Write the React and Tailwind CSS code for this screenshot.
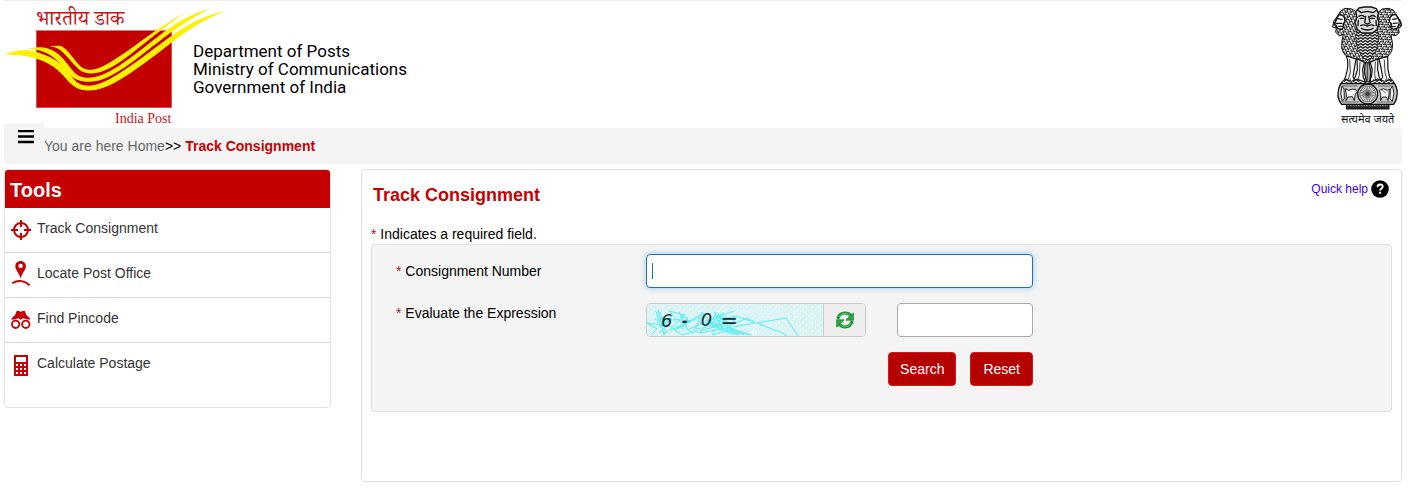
import React from "react";

const sans = "font-['Liberation_Sans',Arial,sans-serif]";

function IndiaPostLogo() {
  return (
    <svg viewBox="12 3 567 369" className="block h-[123px] w-[189px] shrink-0 overflow-visible" role="img" aria-label="India Post">
      <rect x="109" y="92" width="406" height="231" fill="#c20000" stroke="#d44" strokeWidth="1.5" />
      <g fill="#fff000">
        <path d="M147 138L182 137C205 147 225 185 243 200C260 213 282 211 302 202C370 172 465 83 558 37C470 92 375 190 308 214C280 224 255 222 238 209C215 190 195 158 176 147C168 142 158 140 147 138Z" />
        <path d="M84 147C105 141 125 140 142 145C180 155 200 192 222 216C237 232 258 236 282 232C342 220 420 150 480 105C530 66 580 38 630 27C570 55 525 88 480 122C420 167 350 230 290 243C255 250 225 242 207 222C185 195 162 166 130 155C115 150 100 147 84 147Z" />
        <path d="M13 163C40 153 65 148 84 151C132 158 175 180 202 212C217 232 227 250 252 256C282 261 312 248 350 225C400 195 450 155 500 118C550 80 610 46 676 33C610 60 560 92 512 130C452 177 402 215 352 244C312 267 282 274 255 271C225 267 210 250 193 230C165 197 130 181 100 173C70 166 40 165 13 163Z" />
      </g>
      <text x="108" y="76" fontSize="61" fill="#c4161c" fontFamily="'Noto Serif Devanagari','Noto Sans',serif">भारतीय डाक</text>
      <text x="345" y="369" fontSize="42" fill="#c4161c" fontFamily="'Liberation Serif',serif">India Post</text>
    </svg>
  );
}

function Emblem() {
  return (
    <svg viewBox="33 12 213 360" className="block h-[120px] w-[71px] shrink-0" role="img" aria-label="सत्यमेव जयते">
      <defs>
        <pattern id="maneLeft" width="13" height="9" patternUnits="userSpaceOnUse" patternTransform="rotate(32)">
          <rect width="13" height="9" fill="#fff" />
          <path d="M0 2Q4 8 8 3T13 2M6 5V9" fill="none" stroke="#111" strokeWidth="3.6" />
        </pattern>
        <pattern id="maneRight" width="13" height="9" patternUnits="userSpaceOnUse" patternTransform="rotate(-32)">
          <rect width="13" height="9" fill="#fff" />
          <path d="M0 2Q4 8 8 3T13 2M6 5V9" fill="none" stroke="#111" strokeWidth="3.6" />
        </pattern>
        <pattern id="maneFront" x="136" width="14" height="9" patternUnits="userSpaceOnUse">
          <rect width="14" height="9" fill="#fff" />
          <path d="M0 1L7 7L14 1" fill="none" stroke="#111" strokeWidth="3.8" />
        </pattern>
      </defs>
      <g stroke="#111" strokeWidth="3" strokeLinejoin="round">
        <path fill="url(#maneLeft)" d="M109 33L96 24L75 22L62 30L54 43L41 61L38 78L49 82L47 94L58 104L70 101L66 118L65 142L72 158L84 169L112 174L142 187V95L126 95L113 84Z" />
        <path fill="url(#maneRight)" d="M174 34L187 24L205 22L220 27L230 44L242 60L245 75L235 84L238 94L228 104L213 101L218 132L215 151L202 168L174 174L142 187V95L158 95L171 84Z" />
        <path fill="url(#maneFront)" strokeWidth="2" d="M112 80L126 96L158 96L171 80L176 110L170 145L143 187L113 146L107 108Z" />
      </g>
      <g fill="#fff" stroke="#111" strokeWidth="4" strokeLinejoin="round">
        <path d="M107 32L117 21L133 18L154 18L169 23L175 37L172 51L177 64L171 86L157 96L126 96L112 86L105 65L111 49Z" fill="#ddd" />
        <path d="M112 27L124 35L142 31L159 35L170 27" fill="none" />
        <path d="M56 42Q67 39 73 49L75 62L69 69L72 78L65 85L53 82L48 72L43 70Z" />
        <path d="M229 42Q216 38 210 50L208 62L215 69L212 79L220 85L232 81L236 71L242 68Z" />
      </g>
      <g fill="none" stroke="#111" strokeWidth="4" strokeLinecap="round">
        <path d="M117 46Q125 40 133 47M150 47Q158 40 166 47M120 52H131M152 52H163M137 46L134 65L142 70L150 65L146 46M122 74Q132 68 142 76Q152 68 162 74M124 82Q142 92 159 82M115 58L114 74M168 58L169 74" />
        <path d="M53 53L66 55M48 67L65 67M56 76L68 76M230 53L218 55M235 66L220 67M226 76L215 77" strokeWidth="3.5" />
      </g>
      <g fill="#f4f4f4" stroke="#111" strokeWidth="3.5" strokeLinejoin="round">
        <path d="M79 165Q87 185 81 211L76 229Q70 238 77 244L101 244Q106 237 99 228L103 203L108 174Z" />
        <path d="M111 174L112 207L105 229Q98 239 109 244L132 245Q137 237 130 229L128 206L133 184Z" />
        <path d="M151 184L157 207L154 228Q147 239 155 245L178 244Q185 237 178 229L173 206L174 174Z" />
        <path d="M177 173L184 206L188 228Q180 238 187 244L211 244Q217 237 209 228L204 206L203 167Z" />
        <path d="M136 186L133 213L140 244L149 244L153 213L147 186Z" fill="#aaa" />
      </g>
      <path
        d="M89 174L91 213L85 235M120 182L118 223L113 238M166 182L164 220L167 239M193 176L195 214L201 236M142 189L142 239M82 233L80 241M91 234L90 242M197 234L198 242M205 232L207 240M161 235L160 242M170 235L171 242"
        fill="none"
        stroke="#222"
        strokeWidth="2.5"
      />
      <path d="M62 250Q66 236 79 235L94 241L111 234L132 242L153 242L173 234L194 241L211 235Q224 237 222 250Z" fill="url(#maneFront)" stroke="#111" strokeWidth="3" />
      <path d="M62 248L224 248Q234 268 231 282Q231 296 221 310L65 310Q53 294 54 278Q54 263 62 248Z" fill="#c9c9c9" stroke="#111" strokeWidth="4" />
      <g fill="#f5f5f5" stroke="#222" strokeWidth="3">
        <path d="M66 255Q58 278 67 301L73 293L72 264Z" />
        <path d="M76 263L86 268L98 264L108 266L112 272L106 279L103 299L97 287L84 288L78 299L79 282Z" />
        <path d="M218 255Q226 278 217 301L210 293L211 264Z" />
        <path d="M178 268L190 263L202 268L208 265L207 280L204 299L199 288L187 288L182 299L182 280Z" />
      </g>
      <path d="M65 255H112M174 255H219M67 303H116M170 303H218M187 266L196 276" fill="none" stroke="#333" strokeWidth="2" />
      <circle cx="143" cy="279" r="30" fill="#ddd" stroke="#111" strokeWidth="4" />
      <circle cx="143" cy="279" r="24" fill="#f8f8f8" stroke="#333" strokeWidth="2" />
      <g stroke="#333" strokeWidth="1.8">
        {Array.from({ length: 12 }, (_, i) => (
          <path key={i} d="M120 279H166" transform={`rotate(${i * 15} 143 279)`} />
        ))}
      </g>
      <circle cx="143" cy="279" r="6" fill="#444" />
      <path d="M79 312H207V324H79Z" fill="#222" stroke="#111" strokeWidth="3" />
      <path d="M82 314H204" stroke="#aaa" strokeWidth="3" strokeDasharray="5 3" />
      <text x="143" y="365" fontSize="33" textAnchor="middle" fill="#111" fontFamily="'Noto Sans',sans-serif">सत्यमेव जयते</text>
    </svg>
  );
}

const iconClass = "h-8 w-5 shrink-0";

function TargetIcon() {
  return (
    <svg viewBox="0 0 20 32" className={iconClass} aria-hidden="true" fill="none" stroke="#c80000" strokeWidth="2">
      <circle cx="10" cy="18" r="7" />
      <path d="M10 8V15M10 21V28M0 18H7M13 18H20" />
    </svg>
  );
}

function PinIcon() {
  return (
    <svg viewBox="0 0 20 32" className={iconClass} aria-hidden="true">
      <path fillRule="evenodd" fill="#c80000" d="M9.6 4C6.5 4 4.3 6.3 4.3 9.2C4.3 12.5 7.5 15 9.6 21.5C11.6 15 14.9 12.5 14.9 9.2C14.9 6.3 12.7 4 9.6 4ZM9.6 6.7A2.2 2.2 0 1 1 9.6 11.1A2.2 2.2 0 1 1 9.6 6.7Z" />
      <path d="M1.2 26.3C7 22.5 14 23.5 18.5 28.4" fill="none" stroke="#c80000" strokeWidth="1.8" />
    </svg>
  );
}

function SpyIcon() {
  return (
    <svg viewBox="0 0 20 32" className={iconClass} aria-hidden="true">
      <path fill="#c80000" d="M5.6 9H8.3L9.7 10L11.2 9H13.9L15.3 13C17 14 18.6 15.7 19.3 17.8C16.5 17.4 14 16.8 12.4 16.2L9.8 17.8L7.2 16.2C5.5 16.9 3 17.4.2 17.8C1 15.7 2.5 14 4.2 13Z" />
      <g fill="none" stroke="#c80000" strokeWidth="1.8">
        <circle cx="4.6" cy="22.3" r="3.7" />
        <circle cx="14.8" cy="22.3" r="3.7" />
      </g>
    </svg>
  );
}

function CalculatorIcon() {
  return (
    <svg viewBox="0 0 20 32" className={iconClass} aria-hidden="true">
      <path fill="#c80000" d="M3 8H17V29H3Z" />
      <path fill="#fff" d="M5 10H15V15H5ZM5 17H7V19H5ZM9 17H11V19H9ZM13 17H15V19H13ZM5 21H7V23H5ZM9 21H11V23H9ZM13 21H15V23H13ZM5 25H7V27H5ZM9 25H11V27H9ZM13 25H15V27H13Z" />
    </svg>
  );
}

function HelpIcon() {
  return (
    <svg viewBox="0 0 18 18" className="size-[18px]" aria-hidden="true">
      <circle cx="9" cy="9" r="8.8" fill="#000" />
      <path d="M6.5 7C6.6 5.3 7.6 4.5 9.1 4.5C10.7 4.5 11.7 5.4 11.7 6.7C11.7 8.4 9.1 8.5 9.1 10.6" fill="none" stroke="#fff" strokeWidth="1.9" />
      <rect x="8.1" y="11.7" width="2" height="2" fill="#fff" />
    </svg>
  );
}

function RefreshIcon() {
  return (
    <svg viewBox="0 0 18 18" className="size-[18px]" aria-hidden="true">
      <path d="M5.5 5.5L9 3.8L10.5 7L14.5 9.5L11 11L9.5 14L7 10.8L3.5 9Z" fill="#fff" />
      <g fill="none" stroke="#0f8f2c" strokeWidth="3">
        <path d="M1.8 7.8C2.7 4.4 5.6 2.1 9 2.1C11.4 2.1 13.6 3.2 15 5" />
        <path d="M16.2 10.2C15.3 13.6 12.4 15.9 9 15.9C6.6 15.9 4.4 14.8 3 13" />
      </g>
      <path d="M17.4 2V9.2H9.8ZM.6 16V8.8H8.2Z" fill="#2fa548" stroke="#0f8f2c" strokeWidth=".8" />
      <g fill="none" stroke="#7bd68a" strokeWidth=".9">
        <path d="M3 6C4.2 3.6 6.4 2.2 9 2.2C10.8 2.2 12.4 2.8 13.6 4" />
        <path d="M15 12C13.8 14.4 11.6 15.8 9 15.8C7.2 15.8 5.6 15.2 4.4 14" />
      </g>
    </svg>
  );
}

function Captcha() {
  return (
    <svg viewBox="0 0 177 32" preserveAspectRatio="none" className="block h-8 min-w-0 flex-1 bg-[#d9f3f5]" role="img" aria-label="6 - 0 =">
      <defs>
        <pattern id="grain" width="6" height="6" patternUnits="userSpaceOnUse">
          <path d="M0 1L2 0M3 4L5 3M1 5L2 6M4 1L5 2" stroke="#fff" strokeWidth=".7" opacity=".8" />
        </pattern>
      </defs>
      <rect width="177" height="32" fill="url(#grain)" />
      <g fill="none" stroke="#35eef4" strokeWidth="1" opacity=".8">
        <path d="M0 19L20 22L11 6L17 31L38 11L22 7L45 29L59 9L28 26L44 17L13 14L35 31L68 23L55 8L49 25L82 19L67 8L92 31L61 17L105 31L80 26L66 31L77 9L55 21L89 12L110 19L140 14L152 32" />
        <path d="M9 7L14 24L26 10L16 29L43 18L32 8L41 26L65 14L52 29L76 25L69 12L84 21L101 14L110 19L80 24L98 31M110 19L134 28L141 32M0 19L10 25L4 31M16 13L24 18L12 29M70 8L63 20L88 31M33 12L41 14L39 19L54 11" />
        <path d="M66 16L87 7M71 11L89 16M65 20L83 29M72 17L84 23M90 12L85 20M21 15L29 17M8 15L17 19M30 22L38 25" strokeWidth="1.8" opacity=".6" />
      </g>
      <path d="M20 31L28 9M50 30L59 17M105 31L110 18M110 31L108 20" stroke="#fff" strokeWidth="1" opacity=".8" />
      <g fill="#1a2a2a" fontFamily="'DejaVu Sans',sans-serif" fontStyle="italic">
        <text x="14" y="23" fontSize="18">6</text>
        <text x="35" y="22" fontSize="15" fontWeight="bold">-</text>
        <text x="54" y="22" fontSize="18">0</text>
        <text x="74" y="24" fontSize="21">=</text>
      </g>
    </svg>
  );
}

const tools = [
  { label: "Track Consignment", Icon: TargetIcon },
  { label: "Locate Post Office", Icon: PinIcon },
  { label: "Find Pincode", Icon: SpyIcon },
  { label: "Calculate Postage", Icon: CalculatorIcon },
];

function Star() {
  return <span className="text-[#b5121b]">*</span>;
}

export default function App() {
  return (
    <div className={`${sans} bg-white pr-[14px] pl-1 text-sm leading-5 text-black`}>
      <header className="mb-[3px] flex items-start border-t border-[#eeeeee]">
        <IndiaPostLogo />
        <p className="mt-[41px] flex-1 font-[Roboto,sans-serif] text-[17px] leading-[18px]">
          Department of Posts
          <br />
          Ministry of Communications
          <br />
          Government of India
        </p>
        <div className="pt-1">
          <Emblem />
        </div>
      </header>

      <nav aria-label="Breadcrumb" className="flex h-9 items-center rounded bg-[#f4f4f4]">
        <button type="button" aria-label="Menu" className="-mt-[5px] flex h-7 w-10 items-center justify-center self-start rounded-tl bg-[#f4f4f4] pl-1">
          <svg viewBox="0 0 16 14" className="h-[14px] w-4" aria-hidden="true">
            <path d="M0 1H16M0 6.5H16M0 12H16" stroke="#000" strokeWidth="2.4" />
          </svg>
        </button>
        <span className="text-[#666666]">
          You are here <a href="#home">Home</a>
        </span>
        <span>&gt;&gt;&nbsp;</span>
        <span className="font-bold text-[#c80000]">Track Consignment</span>
      </nav>

      <div className="mt-[5px] grid grid-cols-4 items-start gap-[30px]">
        <aside className="overflow-hidden rounded border border-[#e3e3e3] pb-5">
          <h2 className="bg-[#c40000] px-[5px] pt-1.5 pb-1 text-xl leading-7 font-bold text-white">Tools</h2>
          <ul className="divide-y divide-[#d5d5e3]">
            {tools.map(({ label, Icon }) => (
              <li key={label}>
                <a href="#tool" className="flex h-11 items-center gap-1.5 px-1.5 pb-1 text-[#333333]">
                  <Icon />
                  {label}
                </a>
              </li>
            ))}
          </ul>
        </aside>

        <main className="col-span-3 rounded border border-[#e0e0e0] px-[9px] pt-2 pb-[69px]">
          <div className="flex items-start justify-between px-0.5">
            <h1 className="pt-[3px] text-lg leading-7 font-bold text-[#c80000]">Track Consignment</h1>
            <a href="#help" className="mt-0.5 mr-px flex items-center gap-[3px] text-xs leading-[18px] text-[#3a00f0]">
              Quick help
              <HelpIcon />
            </a>
          </div>
          <p className="mt-[15px]">
            <Star /> Indicates a required field.
          </p>

          <form
            onSubmit={(e) => e.preventDefault()}
            className="grid grid-cols-[minmax(0,250fr)_minmax(0,387fr)_minmax(0,334fr)] gap-y-[15px] rounded-[3px] border border-[#e0e0e0] bg-[#f4f4f4] px-6 pt-[9px] pb-[25px]"
          >
            <label htmlFor="consignment" className="pt-[7px]">
              <Star /> Consignment Number
            </label>
            <div className="relative col-start-2">
              <input
                id="consignment"
                type="text"
                autoFocus
                className="peer block h-[34px] w-full rounded border border-[#1c72b8] bg-white px-1.5 caret-transparent shadow-[0_0_6px_rgba(102,175,233,0.6)] outline-none"
              />
              <span aria-hidden="true" className="absolute top-[9px] left-1.5 hidden h-4 w-px bg-[#1c72b8] peer-focus:peer-placeholder-shown:block peer-focus:block" />
            </div>

            <label htmlFor="answer" className="col-start-1">
              <Star /> Evaluate the Expression
            </label>
            <div className="col-start-2 flex justify-between gap-[31px]">
              <div className="flex h-[34px] w-[220px] min-w-0 overflow-hidden rounded border border-[#cccccc]">
                <Captcha />
                <button type="button" aria-label="New expression" className="flex w-[42px] items-center justify-center border-l border-[#cccccc] bg-[#eeeeee]">
                  <RefreshIcon />
                </button>
              </div>
              <input id="answer" type="text" className="h-[34px] w-0 min-w-0 flex-1 rounded border border-[#aaaaaa] bg-white px-1.5 outline-none" />
            </div>

            <div className="col-start-2 flex justify-end gap-3.5 text-white">
              <button type="submit" className="h-[34px] rounded border border-[#e01020] bg-[#b50000] px-[11px] font-medium">
                Search
              </button>
              <button type="reset" className="h-[34px] rounded border border-[#e01020] bg-[#b50000] px-3 font-medium">
                Reset
              </button>
            </div>
          </form>
        </main>
      </div>
    </div>
  );
}
